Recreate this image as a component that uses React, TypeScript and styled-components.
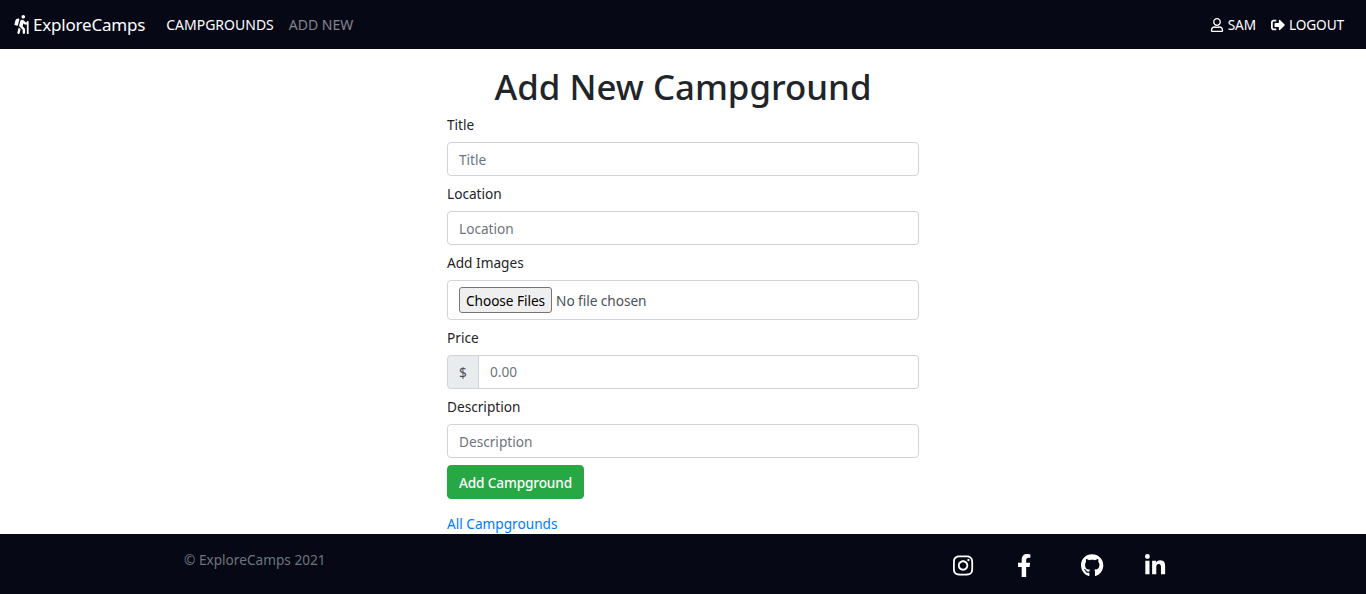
import React from 'react';
import styled, { createGlobalStyle } from 'styled-components';
import { FaHiking, FaRegUser, FaSignOutAlt, FaInstagram, FaFacebookF, FaGithub, FaLinkedinIn } from 'react-icons/fa';

const GlobalStyle = createGlobalStyle`
  html, body {
    margin: 0;
    padding: 0;
    background: #fff;
  }
  body {
    font-family: "Noto Sans", "Open Sans", "Liberation Sans", sans-serif;
    color: #212529;
    font-size: 13.65px;
    line-height: 21px;
  }
  * { box-sizing: border-box; }
`;

const Page = styled.div`
  height: 594px;
  display: flex;
  flex-direction: column;
  overflow: hidden;
`;

const Navbar = styled.nav`
  height: 49px;
  flex: none;
  background: #060816;
  display: flex;
  align-items: center;
  padding: 0 22px 0 12px;
`;

const Brand = styled.a`
  display: flex;
  align-items: center;
  gap: 2px;
  color: #fff;
  font-size: 17px;
  margin-right: 21px;
  letter-spacing: -0.2px;
`;

const NavLink = styled.a<{ $muted?: boolean }>`
  display: flex;
  align-items: center;
  gap: 4px;
  color: ${p => (p.$muted ? 'rgba(255,255,255,0.5)' : '#fff')};
  font-size: 14px;
  margin-right: 15px;
  text-transform: uppercase;
  &:last-child { margin-right: 0; }
`;

const AccountLink = styled(NavLink)`
  font-size: 13.65px;
  letter-spacing: -0.1px;
`;

const Spacer = styled.div`
  flex: 1;
`;

const Main = styled.main`
  flex: 1;
  min-height: 0;
  width: 472px;
  margin: 0 auto;
`;

const Title = styled.h1`
  margin: 14px 0 4px;
  font-size: 34.8px;
  line-height: 48px;
  font-weight: 500;
  text-align: center;
`;

const Field = styled.div`
  margin-bottom: 8px;
  &:last-of-type { margin-bottom: 7px; }
`;

const Label = styled.label`
  display: block;
  height: 21px;
  line-height: 19px;
  margin-bottom: 6px;
`;

const TextInput = styled.input`
  display: block;
  flex: 1;
  width: 100%;
  min-width: 0;
  height: 34px;
  padding: 0 11px;
  font: inherit;
  color: #495057;
  background: #fff;
  border: 1px solid #ced4da;
  border-radius: 4px;
  &::placeholder { color: #6c757d; opacity: 1; }
`;

const FileBox = styled.div`
  display: flex;
  align-items: center;
  height: 40px;
  padding: 0 11px;
  letter-spacing: -0.05px;
  border: 1px solid #ced4da;
  border-radius: 4px;
  color: #495057;
`;

const FileButton = styled.span`
  display: flex;
  align-items: center;
  height: 26px;
  padding: 0 6px;
  margin-right: 4px;
  color: #000;
  background: #efefef;
  border: 1px solid #767676;
  border-radius: 3px;
`;

const InputGroup = styled.div`
  display: flex;
  ${TextInput} {
    padding-bottom: 2px;
    border-radius: 0 4px 4px 0;
    margin-left: -1px;
  }
`;

const Addon = styled.span`
  display: flex;
  align-items: center;
  justify-content: center;
  width: 32px;
  height: 34px;
  flex: none;
  color: #495057;
  background: #e9ecef;
  border: 1px solid #ced4da;
  border-radius: 4px 0 0 4px;
`;

const SubmitButton = styled.button`
  display: block;
  height: 34px;
  padding: 0 11px;
  font: inherit;
  font-weight: 500;
  letter-spacing: -0.15px;
  color: #fff;
  background: #28a745;
  border: 1px solid #28a745;
  border-radius: 4px;
`;

const BackLink = styled.a`
  display: block;
  margin-top: 14px;
  color: #007bff;
`;

const Footer = styled.footer`
  height: 60px;
  flex: none;
  background: #060816;
  display: flex;
  padding: 15px 0 0 184px;
`;

const Copyright = styled.span`
  color: #6c757d;
  width: 769px;
`;

const Socials = styled.div`
  display: grid;
  grid-template-columns: repeat(4, 64px);
  justify-items: start;
  color: #fff;
  padding-top: 5px;
  svg {
    display: block;
    width: 23px;
    height: 23px;
  }
`;

export default function App() {
  return (
    <Page>
      <GlobalStyle />
      <Navbar>
        <Brand><FaHiking size={19} />ExploreCamps</Brand>
        <NavLink>Campgrounds</NavLink>
        <NavLink $muted>Add New</NavLink>
        <Spacer />
        <AccountLink><FaRegUser size={14} />Sam</AccountLink>
        <AccountLink><FaSignOutAlt size={14} />Logout</AccountLink>
      </Navbar>
      <Main>
        <Title>Add New Campground</Title>
        <Field>
          <Label>Title</Label>
          <TextInput placeholder="Title" />
        </Field>
        <Field>
          <Label>Location</Label>
          <TextInput placeholder="Location" />
        </Field>
        <Field>
          <Label>Add Images</Label>
          <FileBox>
            <FileButton>Choose Files</FileButton>
            No file chosen
          </FileBox>
        </Field>
        <Field>
          <Label>Price</Label>
          <InputGroup>
            <Addon>$</Addon>
            <TextInput placeholder="0.00" />
          </InputGroup>
        </Field>
        <Field>
          <Label>Description</Label>
          <TextInput placeholder="Description" />
        </Field>
        <SubmitButton>Add Campground</SubmitButton>
        <BackLink>All Campgrounds</BackLink>
      </Main>
      <Footer>
        <Copyright>© ExploreCamps 2021</Copyright>
        <Socials>
          <FaInstagram preserveAspectRatio="xMinYMid" />
          <FaFacebookF preserveAspectRatio="xMinYMid" />
          <FaGithub preserveAspectRatio="xMinYMid" />
          <FaLinkedinIn preserveAspectRatio="xMinYMid" />
        </Socials>
      </Footer>
    </Page>
  );
}
